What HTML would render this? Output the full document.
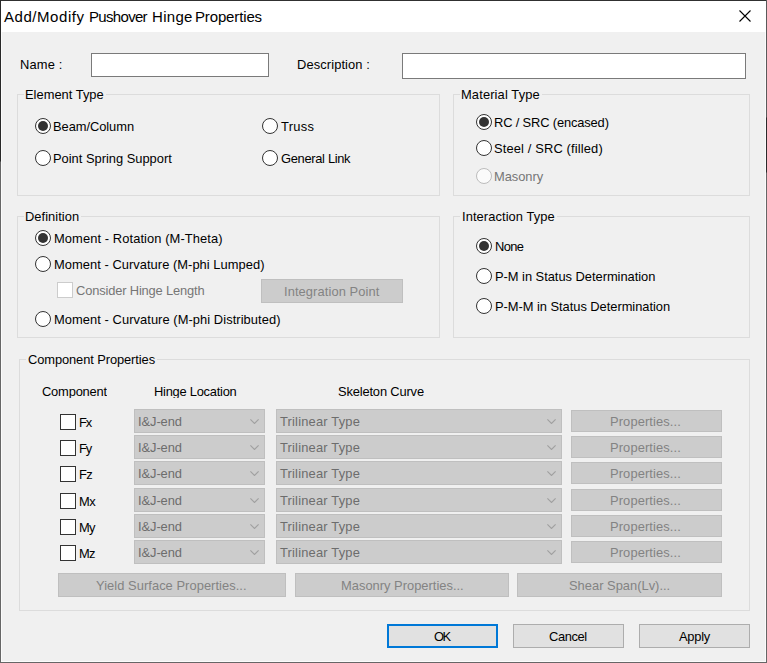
<!DOCTYPE html>
<html><head><meta charset="utf-8"><title>Add/Modify Pushover Hinge Properties</title>
<style>
html,body{margin:0;padding:0;}
body{width:767px;height:663px;overflow:hidden;background:#f0f0f0;position:relative;font-family:"Liberation Sans", sans-serif;font-size:12.9px;color:#000;}
.win{position:absolute;left:0;top:0;width:767px;height:663px;}
.bt{position:absolute;left:0;top:0;width:767px;height:1px;background:#303030;}
.bl{position:absolute;left:0;top:0;width:1px;height:663px;background:linear-gradient(#282828 0,#282828 161px,#666 162px,#666 100%);}
.br{position:absolute;left:766px;top:0;width:1px;height:663px;background:linear-gradient(#5a5a5a 0,#5a5a5a 117px,#2a2a2a 118px,#2a2a2a 172px,#666 173px,#666 100%);}
.bb{position:absolute;left:0;top:662px;width:767px;height:1px;background:#666;}
.il{position:absolute;left:1px;top:32px;width:1px;height:630px;background:#fbfbfb;}
.ir{position:absolute;left:765px;top:32px;width:1px;height:630px;background:#fbfbfb;}
.ib{position:absolute;left:1px;top:661px;width:765px;height:1px;background:#fbfbfb;}
.title{position:absolute;left:1px;top:1px;width:765px;height:31px;background:#fff;}
.title span{position:absolute;left:4px;top:0;line-height:31px;font-size:15px;white-space:nowrap;}
.t{position:absolute;white-space:nowrap;line-height:16px;height:16px;}
.h{height:14px;overflow:hidden;}
.g{color:#767676;}
.inp{position:absolute;box-sizing:border-box;background:#fff;border:1px solid #7a7a7a;}
.grp{position:absolute;box-sizing:border-box;border:1px solid #dcdcdc;}
.gl{position:absolute;background:#f0f0f0;white-space:nowrap;line-height:16px;height:16px;}
.rad{position:absolute;width:16px;height:16px;box-sizing:border-box;border:1px solid #333;border-radius:50%;background:#fff;}
.rad.on::after{content:"";position:absolute;left:2px;top:2px;width:10px;height:10px;border-radius:50%;background:#333;}
.rad.dis{border-color:#bcbcbc;background:#fbfbfb;}
.chk{position:absolute;width:16px;height:16px;box-sizing:border-box;border:1px solid #333;background:#fff;}
.chk.dis{border-color:#ccc;}
.btn{position:absolute;box-sizing:border-box;border:1px solid #adadad;background:#e1e1e1;white-space:nowrap;}
.btn.def{border:2px solid #0078d7;}
.btn.dis{border-color:#bfbfbf;background:#ccc;color:#838383;}
.btn span{position:absolute;top:0;}
.cmb{position:absolute;box-sizing:border-box;border:1px solid #bfbfbf;background:#ccc;color:#6d6d6d;white-space:nowrap;}
.cmb span{position:absolute;top:1px;}
.cmb svg{position:absolute;right:5px;top:9px;}
</style></head>
<body>
<div class="win">
<div class="title"><span style="left:3px;letter-spacing:0.55px">Add/Modify</span> <span style="left:88px;letter-spacing:-0.68px">Pushover</span> <span style="left:151px;letter-spacing:0.3px">Hinge</span> <span style="left:194px;letter-spacing:-0.14px">Properties</span><svg style="position:absolute;left:738px;top:9px" width="12" height="12" viewBox="0 0 12 12"><path d="M0.5 0.5 L11.5 11.5 M11.5 0.5 L0.5 11.5" stroke="#000" stroke-width="1.1" fill="none"/></svg></div>
<div class="t " style="left:20px;top:57px;letter-spacing:0.16px">Name :</div>
<div class="inp" style="left:91px;top:53px;width:178px;height:24px"></div>
<div class="t " style="left:297px;top:57px;letter-spacing:0.1px">Description :</div>
<div class="inp" style="left:402px;top:53px;width:344px;height:26px"></div>
<div class="grp" style="left:17px;top:94px;width:423px;height:102px"></div>
<div class="gl" style="left:24px;top:87px;width:82px;padding-left:1px;box-sizing:border-box;letter-spacing:0.01px">Element Type</div>
<div class="rad on" style="left:35px;top:118px"></div>
<div class="t " style="left:53px;top:119px;letter-spacing:-0.06px">Beam/Column</div>
<div class="rad" style="left:35px;top:150px"></div>
<div class="t " style="left:53px;top:151px;letter-spacing:-0.01px">Point Spring Support</div>
<div class="rad" style="left:262px;top:118px"></div>
<div class="t " style="left:281px;top:119px;letter-spacing:0.27px">Truss</div>
<div class="rad" style="left:262px;top:150px"></div>
<div class="t " style="left:281px;top:151px;letter-spacing:-0.32px">General Link</div>
<div class="grp" style="left:453px;top:94px;width:297px;height:102px"></div>
<div class="gl" style="left:460px;top:87px;width:82px;padding-left:1px;box-sizing:border-box;letter-spacing:0.13px">Material Type</div>
<div class="rad on" style="left:476px;top:114px"></div>
<div class="t " style="left:494px;top:115px;letter-spacing:-0.15px">RC / SRC (encased)</div>
<div class="rad" style="left:476px;top:140px"></div>
<div class="t " style="left:494px;top:141px;letter-spacing:0.14px">Steel / SRC (filled)</div>
<div class="rad dis" style="left:476px;top:168px"></div>
<div class="t g" style="left:494px;top:169px;letter-spacing:-0.05px">Masonry</div>
<div class="grp" style="left:17px;top:216px;width:423px;height:122px"></div>
<div class="gl" style="left:24px;top:209px;width:57px;padding-left:1px;box-sizing:border-box;letter-spacing:0.04px">Definition</div>
<div class="rad on" style="left:35px;top:230px"></div>
<div class="t " style="left:54px;top:231px;letter-spacing:0.09px">Moment - Rotation (M-Theta)</div>
<div class="rad" style="left:35px;top:256px"></div>
<div class="t " style="left:54px;top:257px;letter-spacing:0.04px">Moment - Curvature (M-phi Lumped)</div>
<div class="chk dis" style="left:57px;top:282px"></div>
<div class="t g" style="left:76px;top:283px;letter-spacing:-0.16px">Consider Hinge Length</div>
<div class="btn dis" style="left:261px;top:279px;width:142px;height:24px;line-height:24px"><span style="left:22px;letter-spacing:0.09px">Integration Point</span></div>
<div class="rad" style="left:35px;top:311px"></div>
<div class="t " style="left:54px;top:312px;letter-spacing:0.06px">Moment - Curvature (M-phi Distributed)</div>
<div class="grp" style="left:453px;top:216px;width:297px;height:122px"></div>
<div class="gl" style="left:460px;top:209px;width:97px;padding-left:2px;box-sizing:border-box;letter-spacing:0.07999999999999999px">Interaction Type</div>
<div class="rad on" style="left:476px;top:238px"></div>
<div class="t " style="left:495px;top:239px;letter-spacing:-0.63px">None</div>
<div class="rad" style="left:476px;top:268px"></div>
<div class="t " style="left:495px;top:269px;letter-spacing:-0.03px">P-M in Status Determination</div>
<div class="rad" style="left:476px;top:298px"></div>
<div class="t " style="left:495px;top:299px;letter-spacing:-0.04px">P-M-M in Status Determination</div>
<div class="grp" style="left:19px;top:359px;width:731px;height:252px"></div>
<div class="gl" style="left:26px;top:352px;width:131px;padding-left:2px;box-sizing:border-box;letter-spacing:-0.1px">Component Properties</div>
<div class="t h" style="left:42px;top:384px;letter-spacing:-0.19px">Component</div>
<div class="t h" style="left:154px;top:384px;letter-spacing:-0.25px">Hinge Location</div>
<div class="t h" style="left:338px;top:384px;letter-spacing:-0.16px">Skeleton Curve</div>
<div class="chk" style="left:60px;top:414px"></div>
<div class="t " style="left:79px;top:415px;letter-spacing:-1.0px">Fx</div>
<div class="cmb" style="left:134px;top:409px;width:131px;height:24px;line-height:22px"><span style="left:3px;letter-spacing:-0.08px">I&amp;J-end</span><svg width="9" height="5" viewBox="0 0 9 5"><path d="M0.4 0.4 L4.5 4.5 L8.6 0.4" fill="none" stroke="#a0a0a0" stroke-width="1.1"/></svg></div>
<div class="cmb" style="left:276px;top:409px;width:286px;height:24px;line-height:22px"><span style="left:3px;letter-spacing:0.19px">Trilinear Type</span><svg width="9" height="5" viewBox="0 0 9 5"><path d="M0.4 0.4 L4.5 4.5 L8.6 0.4" fill="none" stroke="#a0a0a0" stroke-width="1.1"/></svg></div>
<div class="btn dis" style="left:571px;top:410px;width:151px;height:22px;line-height:22px"><span style="left:38px;letter-spacing:0.11px">Properties...</span></div>
<div class="chk" style="left:60px;top:440px"></div>
<div class="t " style="left:79px;top:441px;letter-spacing:-1.0px">Fy</div>
<div class="cmb" style="left:134px;top:435px;width:131px;height:24px;line-height:22px"><span style="left:3px;letter-spacing:-0.08px">I&amp;J-end</span><svg width="9" height="5" viewBox="0 0 9 5"><path d="M0.4 0.4 L4.5 4.5 L8.6 0.4" fill="none" stroke="#a0a0a0" stroke-width="1.1"/></svg></div>
<div class="cmb" style="left:276px;top:435px;width:286px;height:24px;line-height:22px"><span style="left:3px;letter-spacing:0.19px">Trilinear Type</span><svg width="9" height="5" viewBox="0 0 9 5"><path d="M0.4 0.4 L4.5 4.5 L8.6 0.4" fill="none" stroke="#a0a0a0" stroke-width="1.1"/></svg></div>
<div class="btn dis" style="left:571px;top:436px;width:151px;height:22px;line-height:22px"><span style="left:38px;letter-spacing:0.11px">Properties...</span></div>
<div class="chk" style="left:60px;top:466px"></div>
<div class="t " style="left:79px;top:467px;letter-spacing:-0.7px">Fz</div>
<div class="cmb" style="left:134px;top:461px;width:131px;height:24px;line-height:22px"><span style="left:3px;letter-spacing:-0.08px">I&amp;J-end</span><svg width="9" height="5" viewBox="0 0 9 5"><path d="M0.4 0.4 L4.5 4.5 L8.6 0.4" fill="none" stroke="#a0a0a0" stroke-width="1.1"/></svg></div>
<div class="cmb" style="left:276px;top:461px;width:286px;height:24px;line-height:22px"><span style="left:3px;letter-spacing:0.19px">Trilinear Type</span><svg width="9" height="5" viewBox="0 0 9 5"><path d="M0.4 0.4 L4.5 4.5 L8.6 0.4" fill="none" stroke="#a0a0a0" stroke-width="1.1"/></svg></div>
<div class="btn dis" style="left:571px;top:462px;width:151px;height:22px;line-height:22px"><span style="left:38px;letter-spacing:0.11px">Properties...</span></div>
<div class="chk" style="left:60px;top:493px"></div>
<div class="t " style="left:79px;top:494px;letter-spacing:-0.4px">Mx</div>
<div class="cmb" style="left:134px;top:488px;width:131px;height:24px;line-height:22px"><span style="left:3px;letter-spacing:-0.08px">I&amp;J-end</span><svg width="9" height="5" viewBox="0 0 9 5"><path d="M0.4 0.4 L4.5 4.5 L8.6 0.4" fill="none" stroke="#a0a0a0" stroke-width="1.1"/></svg></div>
<div class="cmb" style="left:276px;top:488px;width:286px;height:24px;line-height:22px"><span style="left:3px;letter-spacing:0.19px">Trilinear Type</span><svg width="9" height="5" viewBox="0 0 9 5"><path d="M0.4 0.4 L4.5 4.5 L8.6 0.4" fill="none" stroke="#a0a0a0" stroke-width="1.1"/></svg></div>
<div class="btn dis" style="left:571px;top:489px;width:151px;height:22px;line-height:22px"><span style="left:38px;letter-spacing:0.11px">Properties...</span></div>
<div class="chk" style="left:60px;top:519px"></div>
<div class="t " style="left:79px;top:520px;letter-spacing:-0.7px">My</div>
<div class="cmb" style="left:134px;top:514px;width:131px;height:24px;line-height:22px"><span style="left:3px;letter-spacing:-0.08px">I&amp;J-end</span><svg width="9" height="5" viewBox="0 0 9 5"><path d="M0.4 0.4 L4.5 4.5 L8.6 0.4" fill="none" stroke="#a0a0a0" stroke-width="1.1"/></svg></div>
<div class="cmb" style="left:276px;top:514px;width:286px;height:24px;line-height:22px"><span style="left:3px;letter-spacing:0.19px">Trilinear Type</span><svg width="9" height="5" viewBox="0 0 9 5"><path d="M0.4 0.4 L4.5 4.5 L8.6 0.4" fill="none" stroke="#a0a0a0" stroke-width="1.1"/></svg></div>
<div class="btn dis" style="left:571px;top:515px;width:151px;height:22px;line-height:22px"><span style="left:38px;letter-spacing:0.11px">Properties...</span></div>
<div class="chk" style="left:60px;top:545px"></div>
<div class="t " style="left:79px;top:546px;letter-spacing:-0.7px">Mz</div>
<div class="cmb" style="left:134px;top:540px;width:131px;height:24px;line-height:22px"><span style="left:3px;letter-spacing:-0.08px">I&amp;J-end</span><svg width="9" height="5" viewBox="0 0 9 5"><path d="M0.4 0.4 L4.5 4.5 L8.6 0.4" fill="none" stroke="#a0a0a0" stroke-width="1.1"/></svg></div>
<div class="cmb" style="left:276px;top:540px;width:286px;height:24px;line-height:22px"><span style="left:3px;letter-spacing:0.19px">Trilinear Type</span><svg width="9" height="5" viewBox="0 0 9 5"><path d="M0.4 0.4 L4.5 4.5 L8.6 0.4" fill="none" stroke="#a0a0a0" stroke-width="1.1"/></svg></div>
<div class="btn dis" style="left:571px;top:541px;width:151px;height:22px;line-height:22px"><span style="left:38px;letter-spacing:0.11px">Properties...</span></div>
<div class="btn dis" style="left:58px;top:573px;width:228px;height:24px;line-height:24px"><span style="left:37px;letter-spacing:0.05px">Yield Surface Properties...</span></div>
<div class="btn dis" style="left:295px;top:573px;width:214px;height:24px;line-height:24px"><span style="left:45px;letter-spacing:0.01px">Masonry Properties...</span></div>
<div class="btn dis" style="left:517px;top:573px;width:205px;height:24px;line-height:24px"><span style="left:51px;letter-spacing:0.01px">Shear Span(Lv)...</span></div>
<div class="btn def" style="left:387px;top:624px;width:111px;height:24px;line-height:22px"><span style="left:45px;letter-spacing:-1.6px">OK</span></div>
<div class="btn " style="left:513px;top:624px;width:111px;height:24px;line-height:24px"><span style="left:35px;letter-spacing:-0.39px">Cancel</span></div>
<div class="btn " style="left:639px;top:624px;width:111px;height:24px;line-height:24px"><span style="left:39px;letter-spacing:-0.27px">Apply</span></div>
<div class="il"></div><div class="ir"></div><div class="ib"></div><div class="bt"></div><div class="bl"></div><div class="br"></div><div class="bb"></div>
</div>
</body></html>
